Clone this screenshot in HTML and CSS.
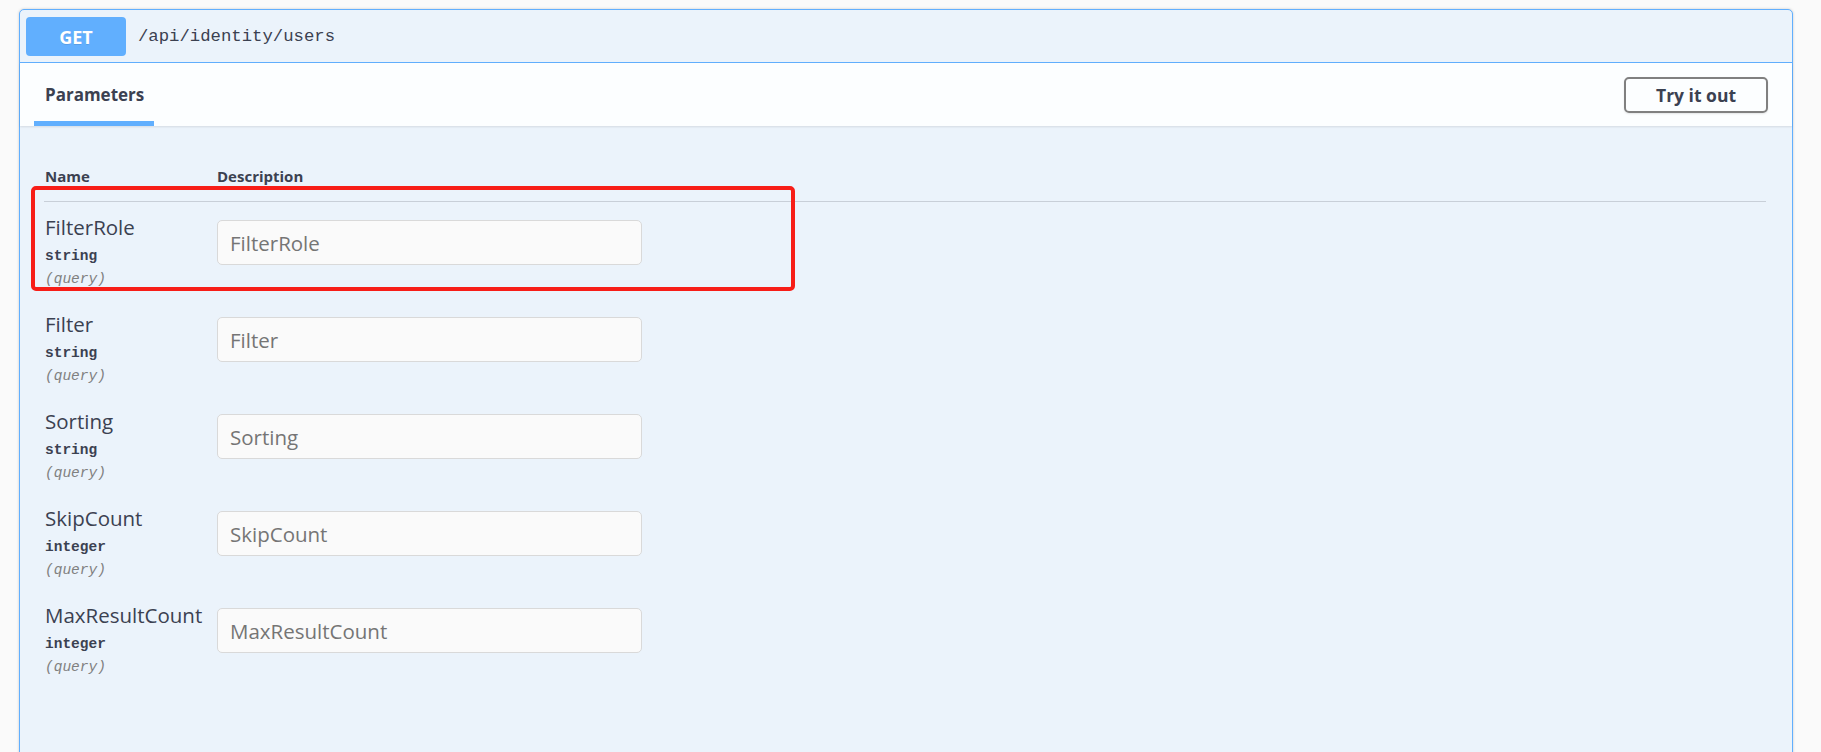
FILE: index.html
```html
<!DOCTYPE html>
<html lang="en">
<head>
<meta charset="utf-8">
<title>GET /api/identity/users</title>
<link rel="stylesheet" href="styles.css">
</head>
<body>
<div class="opblock">
  <div class="summary">
    <span class="method">GET</span>
    <span class="path">/api/identity/users</span>
  </div>
  <div class="section-header">
    <div class="tab">Parameters</div>
    <button class="try-out">Try it out</button>
  </div>
  <div class="table-container">
    <div class="highlight"></div>
    <div class="thead">
      <div>Name</div>
      <div>Description</div>
    </div>
    <div class="row">
      <div class="param">
        <div class="param-name">FilterRole</div>
        <div class="param-type">string</div>
        <div class="param-in">(query)</div>
      </div>
      <div class="param-desc"><input class="field" type="text" placeholder="FilterRole"></div>
    </div>
    <div class="row">
      <div class="param">
        <div class="param-name">Filter</div>
        <div class="param-type">string</div>
        <div class="param-in">(query)</div>
      </div>
      <div class="param-desc"><input class="field" type="text" placeholder="Filter"></div>
    </div>
    <div class="row">
      <div class="param">
        <div class="param-name">Sorting</div>
        <div class="param-type">string</div>
        <div class="param-in">(query)</div>
      </div>
      <div class="param-desc"><input class="field" type="text" placeholder="Sorting"></div>
    </div>
    <div class="row">
      <div class="param">
        <div class="param-name">SkipCount</div>
        <div class="param-type">integer</div>
        <div class="param-in">(query)</div>
      </div>
      <div class="param-desc"><input class="field" type="text" placeholder="SkipCount"></div>
    </div>
    <div class="row">
      <div class="param">
        <div class="param-name">MaxResultCount</div>
        <div class="param-type">integer</div>
        <div class="param-in">(query)</div>
      </div>
      <div class="param-desc"><input class="field" type="text" placeholder="MaxResultCount"></div>
    </div>
  </div>
</div>
</body>
</html>
```
FILE: styles.css
```css
html, body {
  margin: 0;
  padding: 0;
  height: 100%;
  overflow: hidden;
}
body {
  background: #fafafa;
  padding: 9px 28px 0 19px;
  font-family: "Open Sans", "Noto Sans", sans-serif;
  color: #3b4151;
  box-sizing: border-box;
}
.opblock {
  border: 1px solid #61affe;
  border-radius: 5px;
  background: #ebf3fb;
  min-height: 800px;
  box-shadow: 0 0 3px rgba(0, 0, 0, 0.19);
}
.summary {
  display: flex;
  align-items: center;
  padding: 7px 6px 6px 6px;
  border-bottom: 1px solid #61affe;
}
.method {
  width: 100px;
  height: 39px;
  border-radius: 4px;
  background: #61affe;
  color: #fff;
  font-weight: 700;
  font-size: 18px;
  display: flex;
  align-items: center;
  justify-content: center;
  text-shadow: 0 1px 0 rgba(0, 0, 0, 0.1);
}
.path {
  margin-left: 12px;
  font-family: "Liberation Mono", "DejaVu Sans Mono", monospace;
  font-size: 17.3px;
  color: #3b4151;
}
.section-header {
  display: flex;
  align-items: center;
  justify-content: space-between;
  height: 63px;
  padding: 0 24px 0 25px;
  background: rgba(255, 255, 255, 0.85);
  box-shadow: 0 1px 2px rgba(0, 0, 0, 0.1);
}
.tab {
  align-self: stretch;
  display: flex;
  align-items: center;
  position: relative;
  font-size: 17px;
  font-weight: 700;
  color: #3b4151;
}
.tab::after {
  content: "";
  position: absolute;
  left: -11px;
  right: -10px;
  bottom: 0;
  height: 5px;
  background: #61affe;
}
.try-out {
  width: 144px;
  height: 36px;
  border: 2px solid #808080;
  border-radius: 5px;
  background: transparent;
  font-family: "Open Sans", "Noto Sans", sans-serif;
  font-size: 17.5px;
  font-weight: 700;
  color: #3b4151;
  box-shadow: 0 1px 2px rgba(0, 0, 0, 0.1);
  padding: 0;
}
.table-container {
  position: relative;
  padding: 27px 26px 0 24px;
}
.highlight {
  position: absolute;
  left: 11px;
  top: 60px;
  width: 756px;
  height: 97px;
  border: 4px solid #f71d17;
  border-radius: 5px;
}
.thead {
  display: grid;
  grid-template-columns: 172px 1fr;
  padding: 14px 1px 15px;
  border-bottom: 1px solid rgba(59, 65, 81, 0.2);
  font-size: 15px;
  font-weight: 700;
  line-height: 19px;
}
.row {
  display: grid;
  grid-template-columns: 172px 1fr;
  padding: 10px 1px 10px;
}
.param-name {
  font-size: 20.5px;
  line-height: 30px;
  color: #3b4151;
}
.param-type {
  padding-top: 2px;
  font-family: "Liberation Mono", "DejaVu Sans Mono", monospace;
  font-size: 14.5px;
  font-weight: 700;
  line-height: 25px;
  color: #3b4151;
}
.param-in {
  font-family: "Liberation Mono", "DejaVu Sans Mono", monospace;
  font-size: 14.5px;
  font-style: italic;
  line-height: 20px;
  color: #808080;
}
.param-desc {
  padding-top: 8px;
}
.field {
  display: block;
  box-sizing: border-box;
  width: 425px;
  height: 45px;
  margin: 0;
  padding: 0 12px;
  border: 1px solid #d9d9d9;
  border-radius: 5px;
  background: #fafafa;
  font-family: "Open Sans", "Noto Sans", sans-serif;
  font-size: 20.5px;
  color: #3b4151;
  outline: none;
}
.field::placeholder {
  color: #757575;
}
```
